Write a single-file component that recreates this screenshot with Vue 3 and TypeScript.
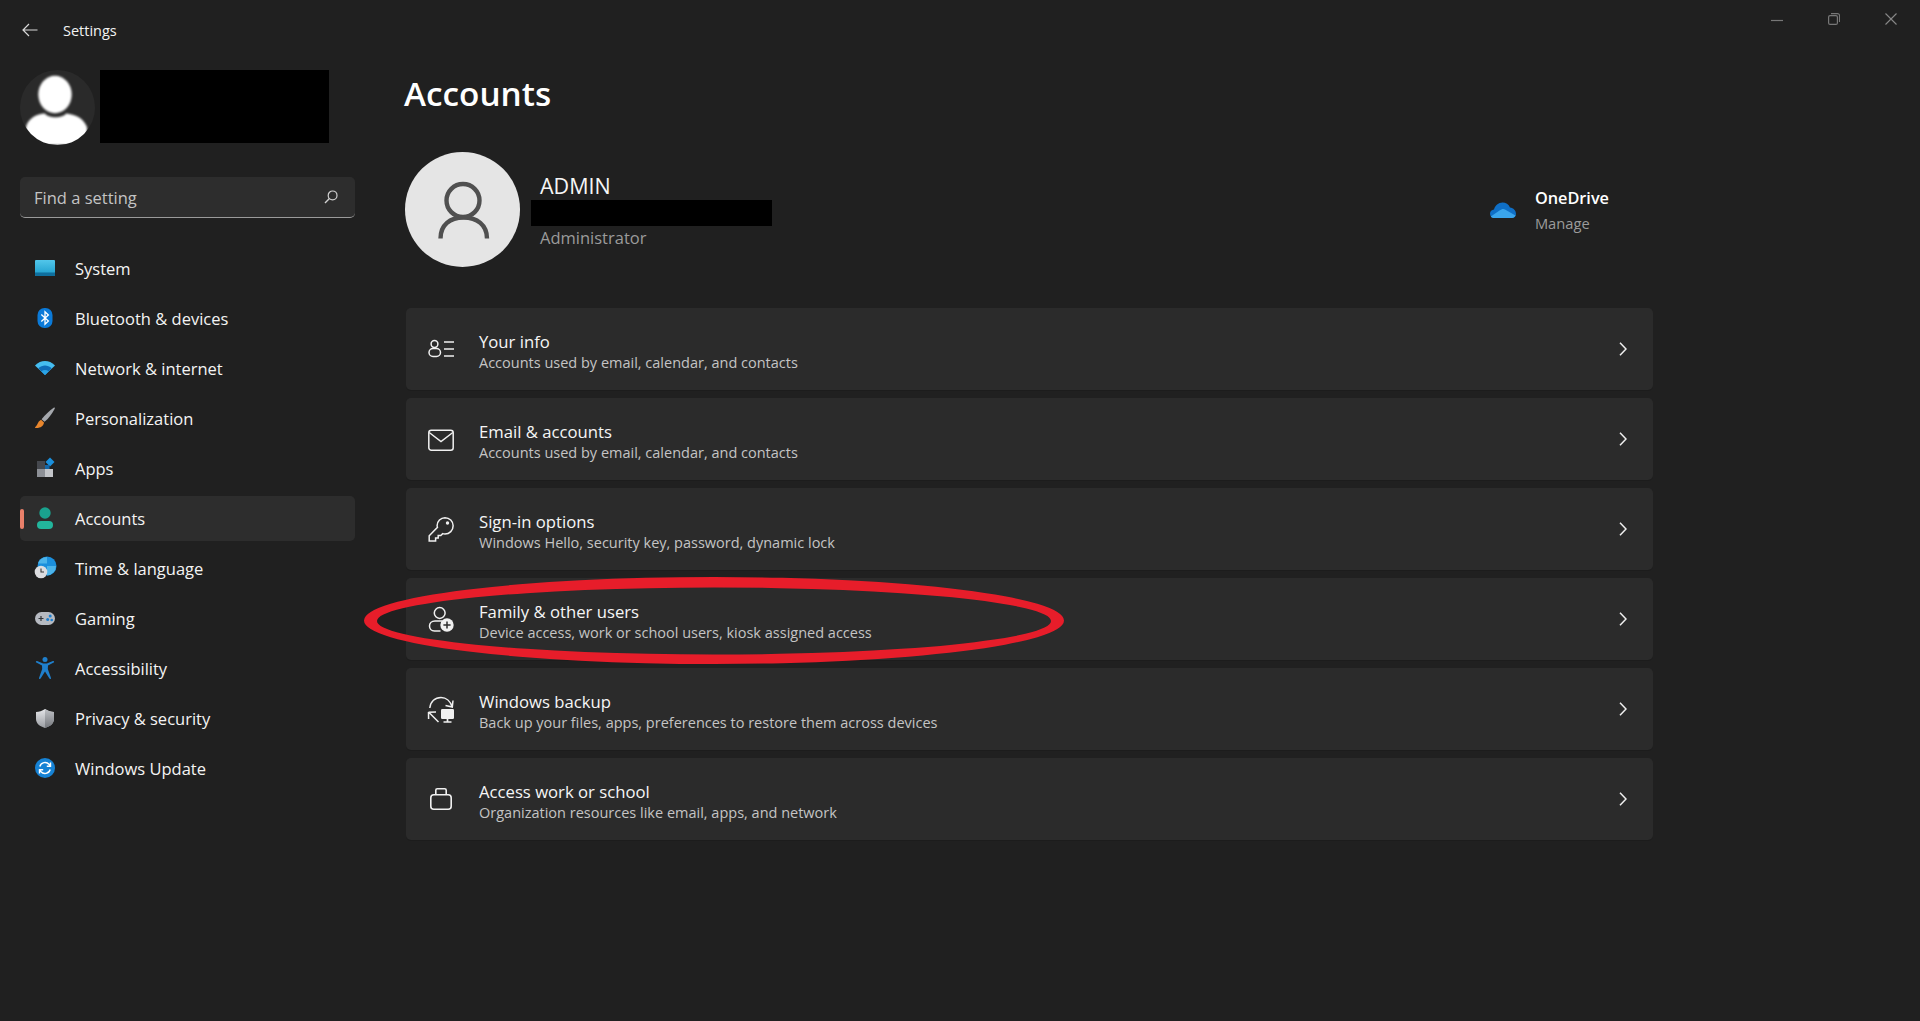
<script setup lang="ts">
interface NavItem { key: string; label: string }
interface Row { key: string; title: string; desc: string }

const nav: NavItem[] = [
  { key: 'system', label: 'System' },
  { key: 'bluetooth', label: 'Bluetooth & devices' },
  { key: 'network', label: 'Network & internet' },
  { key: 'brush', label: 'Personalization' },
  { key: 'apps', label: 'Apps' },
  { key: 'accounts', label: 'Accounts' },
  { key: 'time', label: 'Time & language' },
  { key: 'gaming', label: 'Gaming' },
  { key: 'access', label: 'Accessibility' },
  { key: 'privacy', label: 'Privacy & security' },
  { key: 'update', label: 'Windows Update' },
]

const rows: Row[] = [
  { key: 'info', title: 'Your info', desc: 'Accounts used by email, calendar, and contacts' },
  { key: 'mail', title: 'Email & accounts', desc: 'Accounts used by email, calendar, and contacts' },
  { key: 'key', title: 'Sign-in options', desc: 'Windows Hello, security key, password, dynamic lock' },
  { key: 'family', title: 'Family & other users', desc: 'Device access, work or school users, kiosk assigned access' },
  { key: 'backup', title: 'Windows backup', desc: 'Back up your files, apps, preferences to restore them across devices' },
  { key: 'work', title: 'Access work or school', desc: 'Organization resources like email, apps, and network' },
]
</script>

<template>
  <div class="app">
    <aside class="side">
      <div class="title-row">
        <svg class="back" viewBox="0 0 16 14" width="16" height="14"><path d="M15.500 7H1M7 1 1 7l6 6" fill="none" stroke="#d8d8d8" stroke-width="1.200" /></svg>
        <span class="app-name">Settings</span>
      </div>

      <div class="user">
        <svg class="user-pic" viewBox="0 0 75 75" width="75" height="75">
          <defs>
            <clipPath id="picClip"><circle cx="37.500" cy="37.500" r="37.500" /></clipPath>
            <filter id="soft"><feGaussianBlur stdDeviation="0.800" /></filter>
          </defs>
          <circle cx="37.500" cy="37.500" r="37.500" fill="#2a2a2a" />
          <g clip-path="url(#picClip)">
            <g filter="url(#soft)" fill="#fff">
              <ellipse cx="35" cy="24.500" rx="16.700" ry="18.700" />
              <path d="M6 57C8 48 17 44 25 43.500c3 5 18 5 21 0 9 1 17 4 21 13.500v18H6z" />
            </g>
          </g>
        </svg>
        <div class="redact redact-user"></div>
      </div>

      <div class="search">
        <span>Find a setting</span>
        <svg viewBox="0 0 14 14" width="14" height="14"><circle cx="8.600" cy="5.400" r="4.400" fill="none" stroke="#d0d0d0" stroke-width="1.200" /><path d="M5.400 8.600 1 13" stroke="#d0d0d0" stroke-width="1.400" /></svg>
      </div>

      <nav class="nav">
        <div v-for="item in nav" :key="item.key" class="nav-item" :class="{ active: item.key === 'accounts' }">
          <span v-if="item.key === 'accounts'" class="marker"></span>
          <svg class="nav-icon" viewBox="0 0 24 24" width="24" height="24">
            <defs v-if="item.key === 'system'">
              <linearGradient id="sysG" x1="0" y1="0" x2="0" y2="1"><stop offset="0" stop-color="#52c6ea" /><stop offset="1" stop-color="#1b9ccb" /></linearGradient>
            </defs>
            <defs v-if="item.key === 'privacy'">
              <linearGradient id="shieldL" x1="0" y1="0" x2="0" y2="1"><stop offset="0" stop-color="#e4e5e8" /><stop offset="1" stop-color="#9a9da2" /></linearGradient>
              <linearGradient id="shieldR" x1="0" y1="0" x2="0" y2="1"><stop offset="0" stop-color="#bfc1c5" /><stop offset="1" stop-color="#74777c" /></linearGradient>
            </defs>
            <template v-if="item.key === 'system'">
              <rect x="2" y="4" width="20" height="16" rx="1" fill="url(#sysG)" />
              <path d="M2 16.500h20v2.500a1 1 0 0 1-1 1H3a1 1 0 0 1-1-1z" fill="#0f6f9e" />
            </template>
            <template v-else-if="item.key === 'bluetooth'">
              <rect x="4.500" y="2" width="15" height="20" rx="7" fill="#0b7ad8" />
              <path d="M8.300 8.400 15.400 15 12 18.300V5.700L15.400 9 8.300 15.600" fill="none" stroke="#fff" stroke-width="1.300" />
            </template>
            <template v-else-if="item.key === 'network'">
              <path d="M2 9.500C8 3.600 16 3.600 22 9.500L12 19z" fill="#45bdf0" />
              <path d="M5.400 12.300c4-3.700 9.200-3.700 13.200 0L12 19z" fill="#0f6cb8" />
              <path d="M8.300 15.200c2.300-1.700 5.100-1.700 7.400 0L12 19z" fill="#2aa3e6" />
            </template>
            <template v-else-if="item.key === 'brush'">
              <path d="M21 1.500c.8 0 1 .6.700 1.200C19 8 15.500 12.500 11.500 15.800L8.600 13.200C12 9 16.500 4.500 21 1.500z" fill="#a5a8ad" />
              <path d="M8 13.800l3 2.700c-.5 3.500-3.500 5.800-8.500 5.500-.6-.1-.7-.7-.2-1 2.300-1.300 1.900-5 5.700-7.200z" fill="#e8862d" />
            </template>
            <template v-else-if="item.key === 'apps'">
              <rect x="4" y="5" width="8" height="8" fill="#45484e" />
              <rect x="4" y="13" width="8" height="8" fill="#8d9096" />
              <rect x="12" y="13" width="8" height="8" fill="#c3c5c9" />
              <path d="M17 1.500 21.500 6 17 10.500 12.500 6z" fill="#1a8fdc" />
              <rect x="12" y="9" width="4.500" height="4" fill="#1467a8" />
            </template>
            <template v-else-if="item.key === 'accounts'">
              <circle cx="12" cy="7" r="5.700" fill="#1aa28e" />
              <rect x="4" y="15" width="16" height="8" rx="4" fill="#22b59c" />
            </template>
            <template v-else-if="item.key === 'time'">
              <circle cx="14" cy="10" r="9.500" fill="#1b8fdc" />
              <path d="M14 1a9.500 9.500 0 0 0-9 6.500h9zM14 10v9.500a9.500 9.500 0 0 0 9-9.500z" fill="#4cb4ea" />
              <circle cx="8" cy="16" r="6.300" fill="#dcdde0" />
              <path d="M8 12.500V16h3" fill="none" stroke="#3a3a3a" stroke-width="1.100" />
            </template>
            <template v-else-if="item.key === 'gaming'">
              <rect x="2" y="6" width="20" height="13" rx="6.500" fill="#b6bac1" />
              <path d="M5.500 12.500h5M8 10v5" stroke="#33363b" stroke-width="1.200" />
              <circle cx="17.200" cy="10" r="1.500" fill="#1d7fcf" />
              <circle cx="14.700" cy="13.500" r="1.500" fill="#1d7fcf" />
              <circle cx="18.700" cy="14" r="1.300" fill="#1d7fcf" />
            </template>
            <template v-else-if="item.key === 'access'">
              <circle cx="12" cy="3.500" r="2.500" fill="#1f7fcc" />
              <path d="M3.300 6.500c-.9-.5-.3-2 .8-1.500l6 2.500h3.800l6-2.500c1.100-.5 1.700 1 .8 1.500L15 9.500 14.800 13l3.200 9c.3 1-1.100 1.500-1.600.6L12 15.500 7.600 22.600c-.5.900-1.900.4-1.600-.6L9.200 13 9 9.500z" fill="#1f7fcc" />
            </template>
            <template v-else-if="item.key === 'privacy'">
              <path d="M12 3c3 2 6 3 9 3v7c0 4.500-4 7.500-9 9-5-1.500-9-4.500-9-9V6c3 0 6-1 9-3z" fill="url(#shieldL)" />
              <path d="M12 3v19c5-1.500 9-4.500 9-9V6c-3 0-6-1-9-3z" fill="url(#shieldR)" />
            </template>
            <template v-else>
              <circle cx="12" cy="12" r="10" fill="#1682d4" />
              <path d="M6.800 10.500a5.400 5.400 0 0 1 9.400-2l1.300 1.700M17.500 6.500v3.700h-3.700M17.200 13.500a5.400 5.400 0 0 1-9.400 2L6.500 13.800M6.500 17.500v-3.700h3.700" fill="none" stroke="#fff" stroke-width="1.400" />
            </template>
          </svg>
          <span class="nav-label">{{ item.label }}</span>
        </div>
      </nav>
    </aside>

    <main class="main">
      <div class="caption">
        <svg viewBox="0 0 12 12" width="12" height="12"><path d="M0 7.500h12" stroke="#777" stroke-width="1.200" /></svg>
        <svg viewBox="0 0 12 12" width="12" height="12"><rect x=".6" y="2.600" width="8.800" height="8.800" rx="1.500" fill="none" stroke="#777" stroke-width="1.200" /><path d="M3 .6h6.500a2 2 0 0 1 2 2V9" fill="none" stroke="#777" stroke-width="1.100" /></svg>
        <svg viewBox="0 0 12 12" width="12" height="12"><path d="M.5.500l11 11M11.500.500l-11 11" stroke="#888" stroke-width="1.100" /></svg>
      </div>

      <h1 class="page-title">Accounts</h1>

      <section class="profile">
        <div class="big-pic">
          <svg viewBox="0 0 58 58" width="58" height="58"><circle cx="29" cy="19.500" r="16.500" fill="none" stroke="#505050" stroke-width="4.400" /><path d="M6.500 57.500C6.500 44 16 36.500 29.500 36.500S53 44 53 57.500" fill="none" stroke="#505050" stroke-width="4.400" /></svg>
        </div>
        <div class="who">
          <div class="who-name">ADMIN</div>
          <div class="redact redact-mail"></div>
          <div class="who-role">Administrator</div>
        </div>
        <div class="onedrive">
          <svg viewBox="0 0 26 18" width="26" height="18">
            <path d="M4.500 17C1.500 17 0 15 0 12.800 0 10.400 1.800 8.800 4 8.600 5 4.500 8.500 1.500 12.500 1.500c3.300 0 6.200 1.800 7.500 5 3.500.5 6 3 6 6.500 0 2.500-2 4-4 4z" fill="#0f6fc6" />
            <path d="M4.500 17C3 17 1.300 16.500.8 15.500L9.500 9.500c2-1.500 4-2 5.500-1L25.500 14.500C25 16 23.500 17 22 17z" fill="#3aa5ec" />
          </svg>
          <div class="od-text">
            <div class="od-name">OneDrive</div>
            <div class="od-link">Manage</div>
          </div>
        </div>
      </section>

      <section class="cards">
        <div v-for="row in rows" :key="row.key" class="card">
          <svg class="card-icon" viewBox="0 0 28 28" width="28" height="28" fill="none" stroke="#f0f0f0" stroke-width="1.500">
            <template v-if="row.key === 'info'">
              <circle cx="7.500" cy="9" r="3.400" />
              <rect x="2" y="13.500" width="11.500" height="8" rx="4" />
              <path d="M17 7h10M17 14h10M17 21h10" />
            </template>
            <template v-else-if="row.key === 'mail'">
              <rect x="1.800" y="5.200" width="24.400" height="20" rx="2.500" />
              <path d="M2.200 7.500 14 16.500 25.800 7.500" />
            </template>
            <template v-else-if="row.key === 'key'">
              <path d="M18 2.700a8 8 0 0 1 0 16.300c-1 0-1.500-.1-2.300-.4L13.800 20.500H11.200v2.600H8.600v2.800H2.200V20.800L10.500 12.400c-.3-.9-.4-1.500-.4-1.800a8 8 0 0 1 7.900-7.900z" />
              <circle cx="20.500" cy="8" r="1.700" fill="#f0f0f0" stroke="none" />
            </template>
            <template v-else-if="row.key === 'family'">
              <circle cx="12.700" cy="8" r="5.400" />
              <path d="M13.500 26H7.500c-3.200 0-5-2.300-5-5s2-5 5.500-5H15" />
              <circle cx="20" cy="20" r="6.700" fill="#f0f0f0" stroke="none" />
              <path d="M20 16.400v7.200M16.400 20h7.200" stroke="#2b2b2b" stroke-width="1.500" />
            </template>
            <template v-else-if="row.key === 'backup'">
              <path d="M2.800 13C3.500 6.500 8 2.500 14 2.500c5 0 9.500 3.500 11.200 9.500M26 5.500 25.300 12l-6.800-1.500" />
              <path d="M1.500 17l.1 7M1.500 17.200l7.500-.2M1.800 17.300 11.500 27" />
              <rect x="14" y="14" width="13" height="10" rx="1.200" fill="#f0f0f0" stroke="none" />
              <path d="M20.500 24v2.700M16.500 27h8" stroke-width="1.700" />
            </template>
            <template v-else>
              <rect x="3.800" y="9.800" width="20.400" height="14.400" rx="3" stroke-width="1.600" />
              <path d="M8.800 9.800V5.200A1.500 1.500 0 0 1 10.300 3.700h7.400a1.500 1.500 0 0 1 1.500 1.500v4.600" stroke-width="1.600" />
            </template>
          </svg>
          <div class="card-text">
            <div class="card-title">{{ row.title }}</div>
            <div class="card-desc">{{ row.desc }}</div>
          </div>
          <svg class="chev" viewBox="0 0 8 14" width="8" height="14"><path d="M1 .7 7 7l-6 6.300" fill="none" stroke="#f0f0f0" stroke-width="1.500" /></svg>
        </div>
      </section>
    </main>

    <svg class="scribble" viewBox="0 0 720 100" width="720" height="100">
      <path fill="#e71d2a" fill-rule="evenodd" d="M5 49.500a350 43.500 0 1 0 700 0a350 43.500 0 1 0-700 0zM18 50a337 33.500 0 1 0 674 0a337 33.500 0 1 0-674 0z" />
    </svg>
  </div>
</template>

<style>
html, body { margin: 0; background: #202020; }
</style>

<style scoped>
.app {
  position: relative;
  display: flex;
  height: 1021px;
  overflow: hidden;
  background: #202020;
  color: #fff;
  font-family: "Open Sans", "Noto Sans", sans-serif;
}
.side {
  width: 375px;
  box-sizing: border-box;
  padding: 0 20px;
  flex: none;
}
.title-row {
  display: flex;
  align-items: center;
  height: 60px;
  padding-left: 2px;
}
.back { margin-right: 25px; }
.app-name { font-size: 14.500px; color: #f2f2f2; }
.user {
  display: flex;
  gap: 5px;
  margin-top: 10px;
}
.user-pic { flex: none; }
.redact { background: #000; }
.redact-user { width: 229px; height: 73px; }
.search {
  display: flex;
  align-items: center;
  justify-content: space-between;
  box-sizing: border-box;
  width: 335px;
  height: 41px;
  margin-top: 32px;
  padding: 0 17px 0 14px;
  background: #2d2d2d;
  border-bottom: 1px solid #9a9a9a;
  border-radius: 5px;
  font-size: 16.500px;
  color: #c4c4c4;
}
.nav { margin-top: 28px; width: 335px; }
.nav-item {
  position: relative;
  display: flex;
  align-items: center;
  height: 45px;
  margin-bottom: 5px;
  padding-left: 13px;
  border-radius: 5px;
  font-size: 16.500px;
  color: #f4f4f4;
}
.nav-item.active { background: #2d2d2d; }
.marker {
  position: absolute;
  left: 0;
  top: 13px;
  width: 4px;
  height: 20px;
  border-radius: 2px;
  background: #e9806a;
}
.nav-icon { margin-right: 18px; flex: none; margin-top: -2px; }
.main { flex: 1; min-width: 0; padding-left: 29px; }
.caption {
  display: flex;
  justify-content: flex-end;
  gap: 45px;
  height: 13px;
  padding: 13px 23px 0 0;
}
.page-title {
  margin: 42px 0 0;
  font-size: 33.300px;
  line-height: 50px;
  font-weight: 600;
}
.profile {
  display: flex;
  align-items: center;
  width: 1249px;
  margin: 34px 0 0 1px;
  height: 115px;
}
.big-pic {
  display: flex;
  align-items: center;
  justify-content: center;
  width: 115px;
  height: 115px;
  border-radius: 50%;
  background: #e5e5e5;
  flex: none;
}
.who {
  margin-left: 20px;
  padding-top: 2px;
  flex: 1;
}
.who-name { font-size: 21.500px; line-height: 28px; color: #f6f6f6; }
.redact-mail { width: 241px; height: 26px; margin-left: -9px; }
.who-role { font-size: 16.500px; line-height: 24px; color: #9b9b9b; }
.onedrive { display: flex; align-items: center; gap: 19px; margin-right: 45px; }
.od-text { display: flex; flex-direction: column; gap: 3px; }
.od-name { font-size: 16.300px; line-height: 24px; font-weight: 600; }
.od-link { font-size: 14.700px; line-height: 20px; color: #9b9b9b; }
.cards {
  display: flex;
  flex-direction: column;
  gap: 8px;
  width: 1247px;
  margin: 41px 0 0 2px;
}
.card {
  display: flex;
  align-items: center;
  height: 82px;
  padding: 0 26px 0 21px;
  border-radius: 5px;
  background: #2b2b2b;
  box-shadow: 0 1px 0 #1c1c1c;
}
.card-icon { flex: none; margin-right: 24px; }
.card-text { flex: 1; min-width: 0; padding-top: 3px; }
.card-title { font-size: 16.700px; line-height: 23px; color: #f6f6f6; }
.card-desc { font-size: 14.500px; line-height: 19px; color: #c4c4c4; }
.chev { flex: none; }
.scribble {
  position: absolute;
  left: 359px;
  top: 571px;
  pointer-events: none;
}
</style>
